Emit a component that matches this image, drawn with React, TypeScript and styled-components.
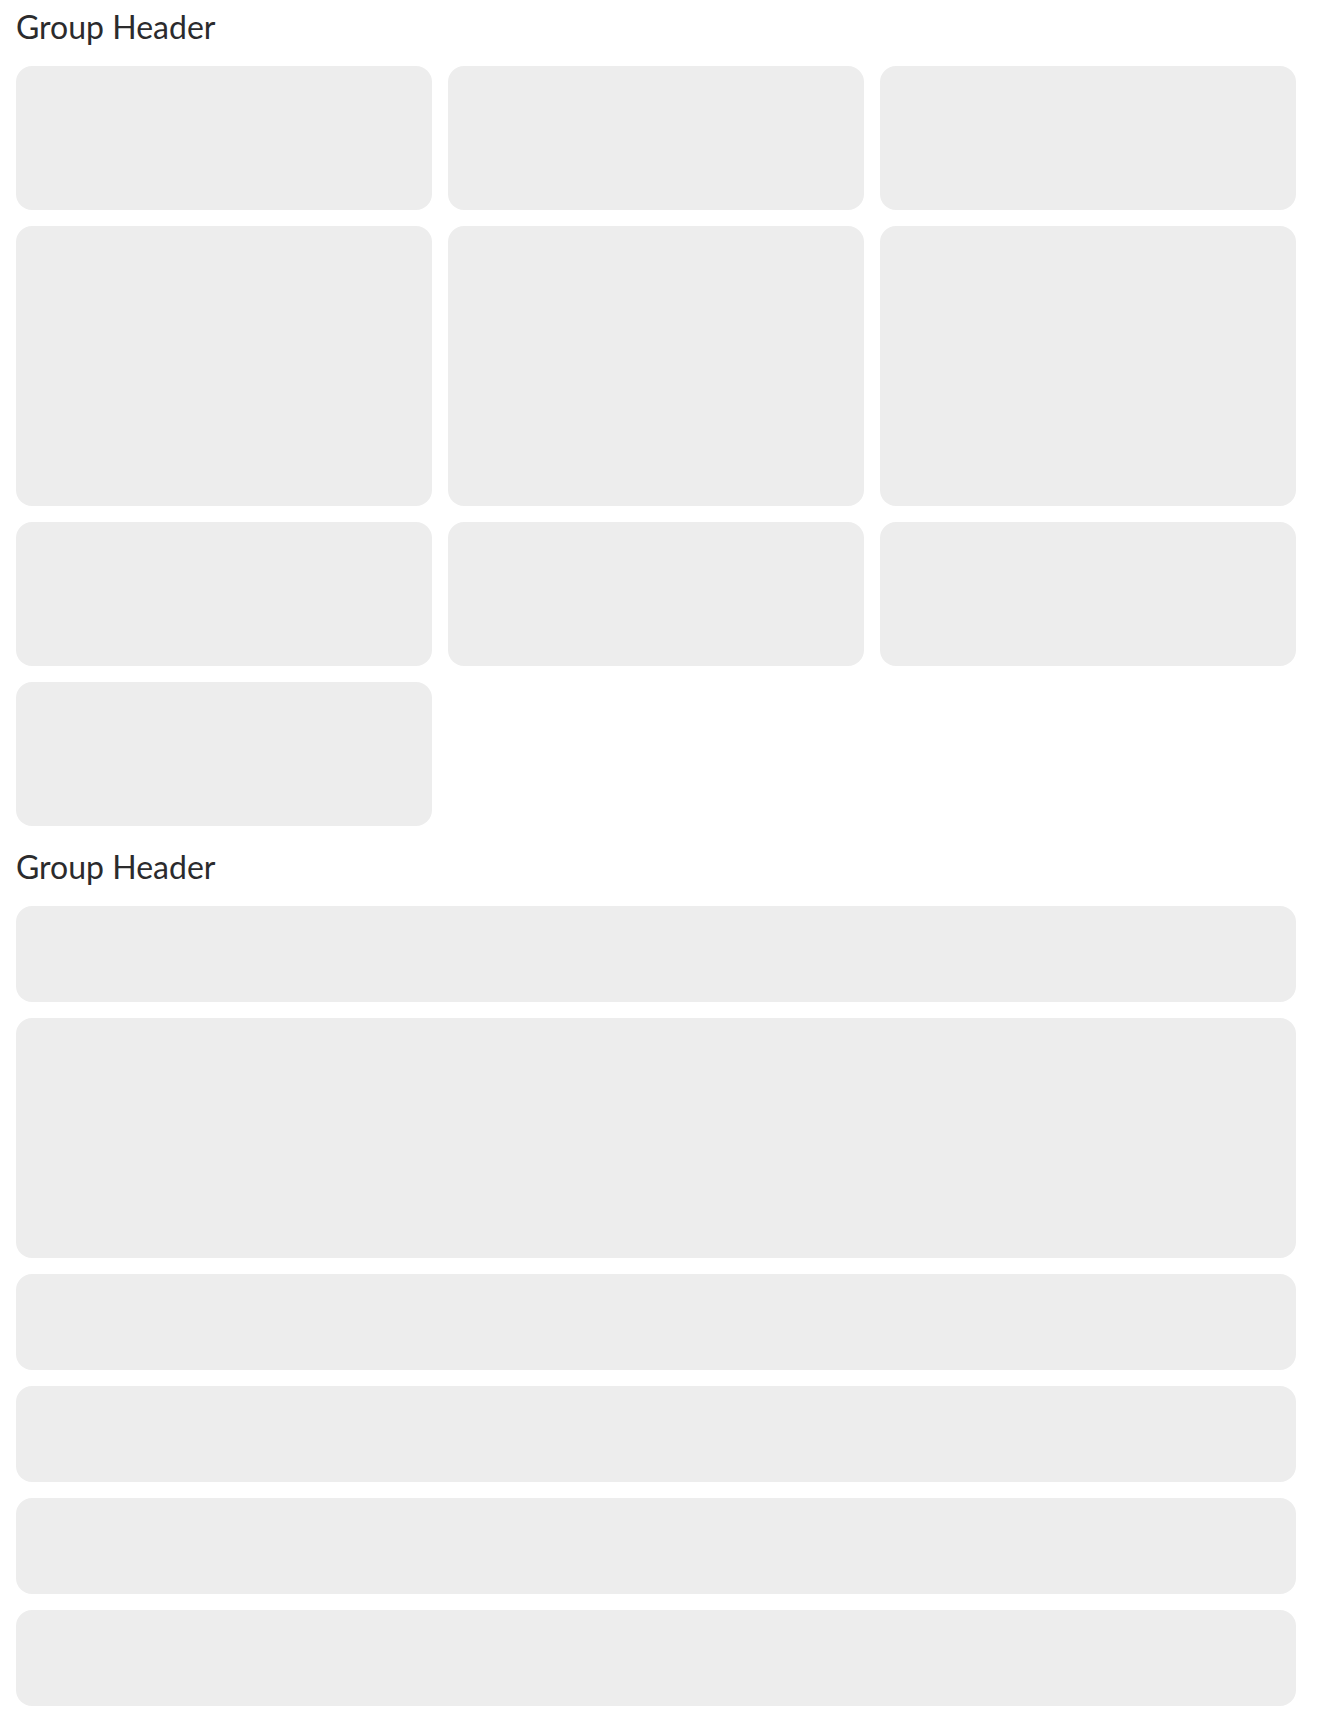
import styled, { createGlobalStyle } from 'styled-components';

type Tile = { height: number };

const GlobalStyle = createGlobalStyle`
  html, body {
    margin: 0;
    padding: 0;
    background: #ffffff;
  }
  body {
    font-family: Lato, "Open Sans", sans-serif;
  }
`;

const Page = styled.main`
  display: flex;
  flex-direction: column;
  gap: 21px;
  padding: 7px 24px 18px 16px;
`;

const Group = styled.section`
  display: flex;
  flex-direction: column;
  gap: 19px;
`;

const GroupTitle = styled.h2`
  margin: 0;
  font-size: 32px;
  line-height: 40px;
  font-weight: 400;
  color: #2b2b2d;
`;

const Grid = styled.div<{ $columns: number }>`
  display: grid;
  grid-template-columns: repeat(${(p) => p.$columns}, 1fr);
  gap: 16px;
`;

const Placeholder = styled.div<{ $height: number }>`
  height: ${(p) => p.$height}px;
  border-radius: 16px;
  background: #ededed;
`;

const cardTiles: Tile[] = [
  { height: 144 },
  { height: 144 },
  { height: 144 },
  { height: 280 },
  { height: 280 },
  { height: 280 },
  { height: 144 },
  { height: 144 },
  { height: 144 },
  { height: 144 },
];

const listTiles: Tile[] = [
  { height: 96 },
  { height: 240 },
  { height: 96 },
  { height: 96 },
  { height: 96 },
  { height: 96 },
];

const App = () => {
  return (
    <>
      <GlobalStyle />
      <Page>
        <Group>
          <GroupTitle>Group Header</GroupTitle>
          <Grid $columns={3}>
            {cardTiles.map((tile, i) => (
              <Placeholder key={`card-${i}`} $height={tile.height} />
            ))}
          </Grid>
        </Group>
        <Group>
          <GroupTitle>Group Header</GroupTitle>
          <Grid $columns={1}>
            {listTiles.map((tile, i) => (
              <Placeholder key={`row-${i}`} $height={tile.height} />
            ))}
          </Grid>
        </Group>
      </Page>
    </>
  );
};

export default App;
